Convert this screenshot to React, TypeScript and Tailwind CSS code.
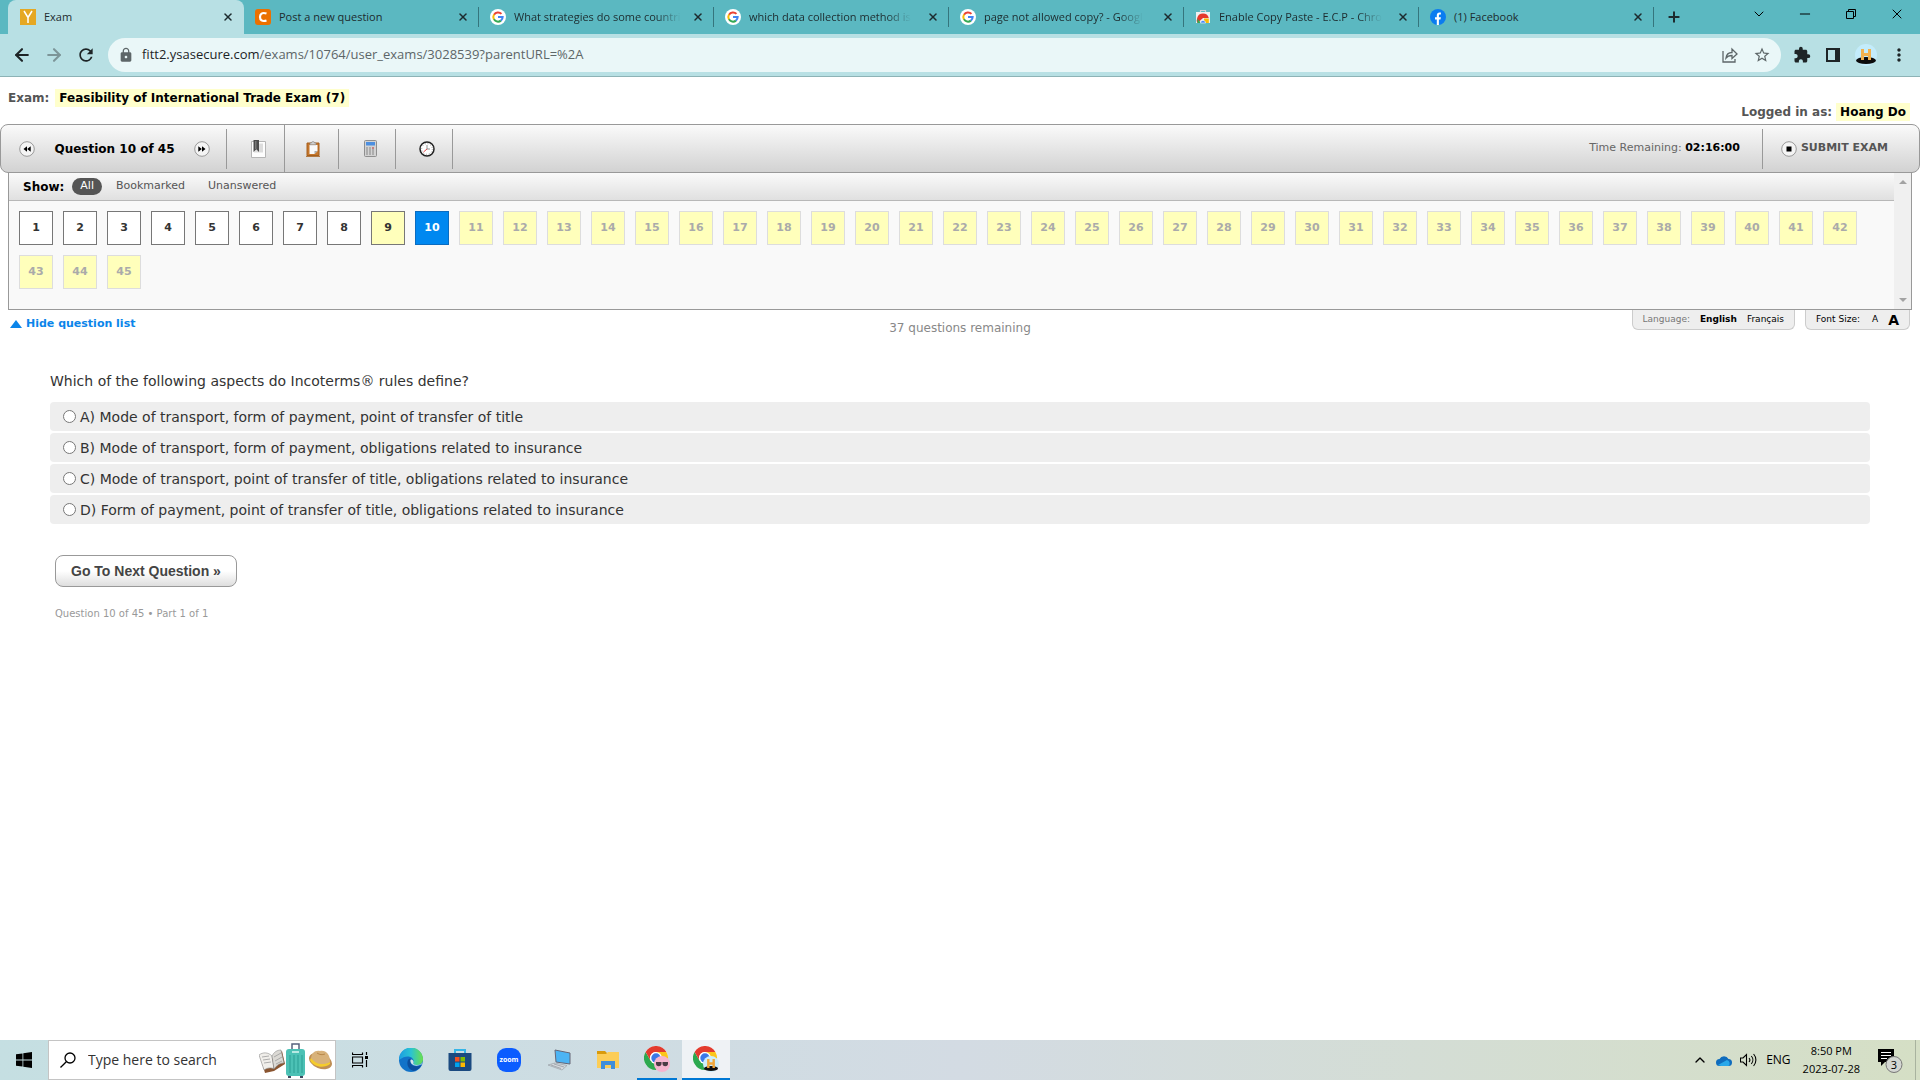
import React, { useState } from "react";
import { ArrowLeft, ArrowRight, ChevronDown, ChevronUp, Minus, Plus, X } from "lucide-react";
import { MdRefresh, MdLock, MdStarBorder, MdExtension, MdMoreVert } from "react-icons/md";

type TabInfo = { title: string; icon: React.ReactNode; active?: boolean; faded?: boolean };

function GoogleIcon() {
  return (
    <svg viewBox="0 0 24 24" className="size-4 shrink-0">
      <circle cx="12" cy="12" r="12" fill="#fff" />
      <g fill="none" strokeWidth="3">
        <path d="M17.2 7.4A7 7 0 0 0 6 8.5" stroke="#ea4335" />
        <path d="M6 8.4a7 7 0 0 0 0 7.2" stroke="#fbbc05" />
        <path d="M6 15.5a7 7 0 0 0 10.4 1.9" stroke="#34a853" />
        <path d="M12 12h7a7 7 0 0 1-2.6 5.4" stroke="#4285f4" />
      </g>
    </svg>
  );
}

function StoreFavicon() {
  return (
    <svg viewBox="0 0 16 16" className="size-4 shrink-0">
      <path d="M5.500 3V1.500h5V3" fill="none" stroke="#cfd4d6" strokeWidth="1.200" />
      <path d="M1 3h14v11H1z" fill="#eef0f1" />
      <path d="M2.500 14a5.500 5.500 0 0 1-.3-5A6 6 0 0 1 13.800 9H8z" fill="#e5392c" />
      <path d="M2.300 9.500 6 14H2.500z" fill="#34a853" />
      <path d="M9 9.500h4.800V14H9z" fill="#fbbc05" />
      <path d="M5.400 14a2.600 2.600 0 1 1 5.200 0z" fill="#4285f4" stroke="#fff" strokeWidth=".6" />
    </svg>
  );
}

const tabs: TabInfo[] = [
  {
    title: "Exam",
    active: true,
    icon: (
      <svg viewBox="0 0 16 16" className="size-4 shrink-0">
        <path d="M0 0h16v16H0z" fill="#e5a823" />
        <path d="M4 2l4 6.500 4-6.500M8 8.500V14" fill="none" stroke="#fff" strokeWidth="1.500" />
      </svg>
    ),
  },
  {
    title: "Post a new question",
    icon: (
      <svg viewBox="0 0 16 16" className="size-4 shrink-0">
        <rect width="16" height="16" rx="3" fill="#eb7100" />
        <path d="M11.500 4.500C7 3 5 5 5 8s2 5 6.500 3.500" fill="none" stroke="#fff" strokeWidth="2.200" />
      </svg>
    ),
  },
  { title: "What strategies do some countri", icon: <GoogleIcon />, faded: true },
  { title: "which data collection method is", icon: <GoogleIcon />, faded: true },
  { title: "page not allowed copy? - Googl", icon: <GoogleIcon />, faded: true },
  { title: "Enable Copy Paste - E.C.P - Chro", icon: <StoreFavicon />, faded: true },
  {
    title: "(1) Facebook",
    icon: (
      <svg viewBox="0 0 16 16" className="size-4 shrink-0">
        <circle cx="8" cy="8" r="8" fill="#0a7cf0" />
        <path d="M6.800 16v-5.500H5V8.200h1.800V6.500c0-1.900 1-2.900 2.700-2.900h1.400v2H9.900c-.7 0-1 .4-1 1.100v1.500h2l-.4 2.300H8.900V16z" fill="#fff" />
      </svg>
    ),
  },
];

function BrowserTabs() {
  return (
    <div className="flex h-[34px] bg-[#5bb8c1] pl-2 text-[#1d2b2e]">
      {tabs.map((t) => (
        <div
          key={t.title}
          className={
            t.active
              ? "flex w-[236px] shrink-0 items-center rounded-t-lg bg-[#b8e0e4] pr-2 pl-3"
              : "flex w-[235px] shrink-0 items-center pl-[11px]"
          }
        >
          <div className="flex flex-1 items-center gap-2">
            {t.icon}
            <span
              className={
                t.faded
                  ? "[mask-image:linear-gradient(to_right,black_85%,transparent)] text-[11px] whitespace-nowrap"
                  : "text-[11px] whitespace-nowrap"
              }
            >
              {t.title}
            </span>
          </div>
          <button aria-label={"Close " + t.title} className={t.active ? "flex size-4 items-center justify-center" : "mx-[7px] flex size-4 items-center justify-center"}>
            <X className="size-3" strokeWidth={3} />
          </button>
          {!t.active && <div className="h-5 w-px bg-[#35757d]" />}
        </div>
      ))}
      <button aria-label="New tab" className="flex w-10 items-center justify-center">
        <Plus className="size-4" strokeWidth={3} />
      </button>
      <div className="ml-auto flex h-7 text-black">
        <button aria-label="Search tabs" className="flex w-[46px] items-center justify-center">
          <ChevronDown className="size-4" strokeWidth={1.5} />
        </button>
        <button aria-label="Minimize" className="flex w-[46px] items-center justify-center">
          <Minus className="size-4" strokeWidth={1.5} />
        </button>
        <button aria-label="Restore" className="flex w-[46px] items-center justify-center">
          <svg viewBox="0 0 10 10" className="size-2.5" fill="none" stroke="#000">
            <path d="M.5 2.500h7v7h-7zM2.500 2.500v-2h7v7h-2" />
          </svg>
        </button>
        <button aria-label="Close window" className="flex w-[46px] items-center justify-center">
          <X className="size-4" strokeWidth={1.5} />
        </button>
      </div>
    </div>
  );
}

function Avatar() {
  return (
    <svg viewBox="0 0 22 22" className="size-[22px]">
      <circle cx="11" cy="11" r="11" fill="#c3ecfb" />
      <ellipse cx="11" cy="16.500" rx="10" ry="3.500" fill="#0c0c0c" />
      <path d="M7.500 5v11M14.500 5v11M7.500 10.500h7" stroke="#f2b14d" strokeWidth="3" fill="none" />
      <path d="M4 17h14" stroke="#0c0c0c" strokeWidth="2" />
    </svg>
  );
}

function AddressBar() {
  return (
    <div className="flex h-[43px] items-center border-b border-[#8db3b6] bg-[#b8e0e4] pr-[11px] pl-3 text-[#1d2426]">
      <div className="flex w-24 items-center gap-3">
        <button aria-label="Back"><ArrowLeft className="size-5" strokeWidth={2.5} /></button>
        <button aria-label="Forward" className="text-[#7c9598]"><ArrowRight className="size-5" strokeWidth={2.5} /></button>
        <button aria-label="Reload"><MdRefresh className="size-5" /></button>
      </div>
      <div className="flex h-[34px] flex-1 items-center rounded-full bg-[#eaf7f8] pr-2.5 pl-2.5 text-[#5d6668]">
        <MdLock className="size-4" />
        <div className="ml-2 flex-1 text-[13px]">
          <span className="text-[#1d2426]">fitt2.ysasecure.com</span>/exams/10764/user_exams/3028539?parentURL=%2A
        </div>
        <button aria-label="Share" className="mr-3.5">
          <svg viewBox="0 0 18 18" className="size-[18px]" fill="none" stroke="currentColor" strokeWidth="1.300">
            <path d="M2 5v11h12v-3M5 12c.5-4 3-5.500 6-5.500V3l5 5-5 4.500V9.500C8.500 9.500 6.500 10 5 12z" />
          </svg>
        </button>
        <button aria-label="Bookmark this tab"><MdStarBorder className="size-[18px]" /></button>
      </div>
      <div className="ml-3 flex items-center gap-3">
        <button aria-label="Extensions"><MdExtension className="size-[18px]" /></button>
        <button aria-label="Side panel" className="flex w-5 justify-center">
          <svg viewBox="0 0 14 14" className="size-3.5">
            <path d="M1 1h12v12H1z" fill="none" stroke="currentColor" strokeWidth="2" />
            <path d="M9 1h4v12H9z" fill="currentColor" />
          </svg>
        </button>
        <button aria-label="Profile"><Avatar /></button>
        <button aria-label="Menu"><MdMoreVert className="size-5" /></button>
      </div>
    </div>
  );
}

function RoundButton({ kind, label }: { kind: "prev" | "next" | "stop"; label: string }) {
  return (
    <svg viewBox="0 0 16 16" className="size-4" role="img" aria-label={label}>
      <circle cx="8" cy="8" r="7.300" fill="#f4f4f4" stroke="#999" strokeWidth="1" />
      {kind === "prev" && <path d="M8 5.300v5.400L4.500 8zM11.700 5.300v5.400L8.200 8z" fill="#000" />}
      {kind === "next" && <path d="M8 5.300v5.400L11.500 8zM4.300 5.300v5.400L7.800 8z" fill="#000" />}
      {kind === "stop" && <path d="M5.500 5.500h5v5h-5z" fill="#000" />}
    </svg>
  );
}

function ExamBar() {
  return (
    <div className="flex h-[49px] items-center rounded-lg border border-[#999] bg-linear-to-b from-[#fafafa] to-[#d2d2d2] text-black">
      <div className="flex h-10 w-[226px] items-center justify-between border-r border-[#999] pr-4 pl-[18px]">
        <button><RoundButton kind="prev" label="Previous question" /></button>
        <span className="text-xs font-bold">Question 10 of 45</span>
        <button><RoundButton kind="next" label="Next question" /></button>
      </div>
      <button aria-label="Bookmark" className="flex h-full w-[58px] items-center justify-center border-r border-[#999] pl-1">
        <svg viewBox="0 0 16 18" className="h-[18px] w-4">
          <path d="M1.500 1.500h14v16h-14z" fill="#fdfdfd" stroke="#b5b5b5" />
          <path d="M4 3.500h9v9H4z" fill="#dcdcdc" />
          <path d="M3.500 0H9v12l-2.700-2.700L3.500 12z" fill="#4a4a4a" />
          <path d="M5 1h1.500v8H5z" fill="#777" />
        </svg>
      </button>
      <button aria-label="Notes" className="flex h-10 w-[54px] items-center justify-center border-r border-[#999] pl-0.5">
        <svg viewBox="0 0 16 17" className="h-[17px] w-4">
          <path d="M2 3h12v12.500H2z" fill="#c5772c" stroke="#a65f1d" />
          <path d="M1 16.300h14" stroke="#a65f1d" />
          <path d="M4.500 5h8v6L9.500 14h-5z" fill="#f9f9f9" />
          <path d="M12.500 11h-3v3z" fill="#a9a9a9" />
          <path d="M5 4.800V3h1.500a1.500 1.500 0 0 1 3 0H11v1.800z" fill="#d0d0d0" stroke="#888" strokeWidth=".6" />
        </svg>
      </button>
      <button aria-label="Calculator" className="flex h-10 w-[57px] items-center justify-center border-r border-[#999] pl-1.5">
        <svg viewBox="0 0 13 17" className="h-[17px] w-[13px]">
          <rect x=".5" y=".5" width="12" height="16" rx="1" fill="#d3d3d3" stroke="#8f8f8f" />
          <path d="M2 2h9v3.500H2z" fill="#4d8fe0" />
          <path d="M2 8h9M2 10h9M2 12h9M2 14h9" stroke="#888" strokeWidth="1.200" strokeDasharray="2 1" />
          <path d="M8 8h2" stroke="#d55" strokeWidth="1.200" />
        </svg>
      </button>
      <button aria-label="Clock" className="flex h-10 w-[57px] items-center justify-center border-r border-[#999] pl-1.5">
        <svg viewBox="0 0 16 16" className="size-4">
          <circle cx="8" cy="8" r="7" fill="#fff" stroke="#222" strokeWidth="1.500" />
          <circle cx="8" cy="8" r="5.300" fill="none" stroke="#555" strokeWidth=".8" strokeDasharray=".7 2.075" />
          <path d="M8 8h3M8 8V4" stroke="#777" strokeWidth=".8" />
          <path d="M8 8l-3.500 3" stroke="#d33" strokeWidth=".9" />
        </svg>
      </button>
      <div className="ml-auto flex h-10 items-center border-r border-[#999] pr-[22px] text-[11px]">
        <span className="text-[#666]">Time Remaining:&nbsp;</span>
        <span className="font-bold">02:16:00</span>
      </div>
      <button className="flex items-center gap-1 pr-[31px] pl-[18px] text-[11px] font-bold text-[#555]">
        <RoundButton kind="stop" label="Submit" />
        SUBMIT EXAM
      </button>
    </div>
  );
}

function QuestionList() {
  const numbers = Array.from({ length: 45 }, (_, i) => i + 1);
  const style = (n: number) =>
    n < 9
      ? "size-[34px] border border-[#777] bg-white text-[#333]"
      : n === 9
        ? "size-[34px] border border-[#777] bg-[#ffffbb] text-[#333]"
        : n === 10
          ? "size-[34px] border border-[#0b6cc0] bg-[#0088f0] text-white"
          : "size-[34px] border border-[#ddd] bg-[#ffffbb] text-[#aaa]";
  return (
    <div className="mx-2 flex border-x border-b border-[#999] bg-[#f9f9f9]">
      <div className="min-w-0 flex-1">
        <div className="flex h-7 items-center border-b border-[#b8b8b8] bg-linear-to-b from-[#fafafa] to-[#e0e0e0] pl-3.5 text-[11px] text-[#555]">
          <span className="mr-2 text-xs font-bold text-black">Show:</span>
          <button className="mr-3.5 h-[17px] rounded-full bg-[#555] px-2 text-white">All</button>
          <button className="mr-[23px]">Bookmarked</button>
          <button>Unanswered</button>
        </div>
        <div className="flex flex-wrap gap-2.5 pt-2.5 pr-2 pb-5 pl-2.5 text-[11px] font-bold">
          {numbers.map((n) => (
            <button key={n} className={style(n)}>{n}</button>
          ))}
        </div>
      </div>
      <div className="flex w-[17px] flex-col items-center justify-between bg-[#f0f0f0] py-[7px]">
        <svg viewBox="0 0 8 4" className="h-1 w-2"><path d="M0 4l4-4 4 4z" fill="#a3a3a3" /></svg>
        <svg viewBox="0 0 8 4" className="h-1 w-2"><path d="M0 0l4 4 4-4z" fill="#a3a3a3" /></svg>
      </div>
    </div>
  );
}

const answers = [
  "A) Mode of transport, form of payment, point of transfer of title",
  "B) Mode of transport, form of payment, obligations related to insurance",
  "C) Mode of transport, point of transfer of title, obligations related to insurance",
  "D) Form of payment, point of transfer of title, obligations related to insurance",
];

function ExamPage() {
  const [picked, setPicked] = useState(-1);
  return (
    <main className="flex-1 bg-white font-['Verdana','DejaVu_Sans',sans-serif]">
      <header className="flex h-[47px] justify-between pr-2.5 pl-2 text-xs font-bold text-[#555]">
        <div className="mt-3 flex h-[18px] items-center">
          Exam:<span className="ml-1.5 bg-[#ffffcc] px-1 leading-[18px] text-black">Feasibility of International Trade Exam (7)</span>
        </div>
        <div className="mt-[26px] flex h-[18px] items-center">
          Logged in as:<span className="ml-1 bg-[#ffffcc] px-1 leading-[18px] text-black">Hoang Do</span>
        </div>
      </header>
      <ExamBar />
      <QuestionList />
      <div className="grid grid-cols-3 items-start px-2.5">
        <button className="mt-1.5 flex items-center gap-1 text-[11px] font-bold text-[#0b85ea]">
          <svg viewBox="0 0 12 8" className="h-2 w-3"><path d="M0 8l6-8 6 8z" fill="#0b85ea" /></svg>
          Hide question list
        </button>
        <p className="mt-2.5 text-center text-xs text-[#888]">37 questions remaining</p>
        <div className="flex justify-end gap-2.5 text-[9px] text-black">
          <div className="flex h-5 items-center rounded-b-md border border-t-0 border-[#ccc] bg-[#eee] px-2.5">
            <span className="mr-2.5 text-[#777]">Language:</span>
            <button className="mr-2.5 font-bold">English</button>
            <button>Français</button>
          </div>
          <div className="flex h-5 items-center rounded-b-md border border-t-0 border-[#ccc] bg-[#eee] px-2.5">
            <span className="mr-3">Font Size:</span>
            <button className="mr-2.5">A</button>
            <button className="text-sm font-bold">A</button>
          </div>
        </div>
      </div>
      <section className="mt-[35px] px-[50px] text-sm text-[#333]">
        <h1 className="leading-5">Which of the following aspects do Incoterms® rules define?</h1>
        <div className="mt-[11px] flex flex-col gap-0.5">
          {answers.map((a, i) => (
            <label key={a} className="flex h-[29px] items-center gap-1 rounded-sm bg-[#eee] pl-[13px]">
              <input
                type="radio"
                name="answer"
                checked={picked === i}
                onChange={() => setPicked(i)}
                className="size-[13px]"
              />
              {a}
            </label>
          ))}
        </div>
        <button className="mt-[31px] ml-[5px] block h-8 rounded-lg border border-[#999] bg-linear-to-b from-white from-50% to-[#dedede] px-[15px] font-['Liberation_Sans',sans-serif] text-sm font-bold text-[#444]">
          Go To Next Question »
        </button>
        <p className="mt-5 ml-[5px] text-[10px] text-[#999]">Question 10 of 45 • Part 1 of 1</p>
      </section>
    </main>
  );
}

function ChromeIcon({ badge }: { badge: "pink" | "hoang" }) {
  return (
    <svg viewBox="0 0 26 26" className="size-[26px]">
      <circle cx="12" cy="12" r="12" fill="#fff" />
      <path d="M12 6h10.400A12 12 0 0 1 12 24l5.200-9z" fill="#fcc61b" />
      <path d="M1.600 6A12 12 0 0 0 12 24l5.200-9L6.800 15z" fill="#2da94f" />
      <path d="M1.600 6A12 12 0 0 1 22.400 6H12a6 6 0 0 0-5.200 9z" fill="#e33b2e" />
      <circle cx="12" cy="12" r="6" fill="#fff" />
      <circle cx="12" cy="12" r="4.700" fill="#3b78e7" />
      {badge === "pink" ? (
        <g>
          <circle cx="18" cy="18" r="8" fill="#f6b4cf" />
          <path d="M12 16h5.500v1.500a2.700 2.700 0 0 1-5.500 0zM18.500 16H24v1.500a2.700 2.700 0 0 1-5.500 0z" fill="#4a3b45" />
        </g>
      ) : (
        <g>
          <circle cx="18" cy="18" r="8" fill="#cdeefb" />
          <ellipse cx="18" cy="22.500" rx="7" ry="2.500" fill="#111" />
          <path d="M15.300 13v9M20.700 13v9M15.300 17.500h5.400" stroke="#f2a83c" strokeWidth="2.400" />
        </g>
      )}
    </svg>
  );
}

function SearchArt() {
  return (
    <svg viewBox="0 0 74 38" className="h-[38px] w-[74px]">
      <path d="M1 15l12 3 10-8 3 13-11 7-9 2z" fill="#8a5530" />
      <path d="M0 14c4-3 9-3 13 1l2 13c-3-2-7-1-10 1z" fill="#f0eeea" stroke="#777" strokeWidth=".5" />
      <path d="M13 15c2-4 5-6 9-6l3 13c-4 0-7 2-10 6z" fill="#dbd9d4" stroke="#777" strokeWidth=".5" />
      <path d="M3 16l7-1M4 19l7-1M5 22l7-1M15 16l7-4M16 20l7-4M17 23l6-3" stroke="#9c9c9c" strokeWidth=".8" />
      <path d="M33 9V3h7v6" fill="none" stroke="#55617d" strokeWidth="1.500" />
      <rect x="27" y="8" width="19" height="27" rx="3" fill="#4cc1b5" />
      <path d="M31 14v18M35 14v18M39 14v18M43 14v18" stroke="#2a9f95" />
      <path d="M33 10h7v2h-7z" fill="#b7e9e3" />
      <path d="M29 35h3v2h-3zM41 35h3v2h-3z" fill="#3f4b61" />
      <ellipse cx="61.500" cy="20" rx="12" ry="7.500" transform="rotate(22 61.500 20)" fill="#bf8f55" />
      <path d="M52 19c0-7 4-10 9-9 6-1 10 3 10 11-5 5-15 3-19-2z" fill="#d8b27a" />
      <path d="M52 17c4 6 12 8 19 4v2c-6 5-17 3-20-4z" fill="#f5cc2c" />
      <path d="M58 12c3 2 5 2 8 1" stroke="#b8884a" fill="none" />
    </svg>
  );
}

function Taskbar() {
  return (
    <footer className="flex h-10 items-center bg-linear-to-r from-[#c5dfe2] via-[#d3dbe3] to-[#d5dfc5] font-['Segoe_UI','Open_Sans',sans-serif] text-black">
      <button aria-label="Start" className="flex w-12 justify-center">
        <svg viewBox="0 0 16 16" className="size-4">
          <path d="M0 2.300 6.500 1.400v6.200H0zM7.300 1.300 16 0v7.600H7.300zM0 8.400h6.500v6.200L0 13.700zM7.300 8.400H16V16l-8.700-1.300z" fill="#000" />
        </svg>
      </button>
      <div className="flex h-10 w-72 items-center border border-[#c4c4c4] bg-white pr-0.5 pl-[11px]">
        <svg viewBox="0 0 16 16" className="size-4" fill="none" stroke="#000" strokeWidth="1.300">
          <circle cx="10" cy="6" r="5" />
          <path d="M6.300 9.700.5 15.500" />
        </svg>
        <input aria-label="Search" placeholder="Type here to search" className="ml-3 w-0 flex-1 text-sm placeholder:text-[#333] placeholder:opacity-100" />
        <SearchArt />
      </div>
      <button aria-label="Task view" className="flex w-12 justify-center">
        <svg viewBox="0 0 16 16" className="size-4" fill="none" stroke="#000" strokeWidth="1.200">
          <path d="M.5.500v2h10v-2M.5 5h10v6H.5zM.5 15.500v-2h10v2M14.500 0v3M14.500 8v7" />
          <path d="M13 4h3v3h-3z" fill="#000" stroke="none" />
        </svg>
      </button>
      <button aria-label="Edge" className="flex w-[54px] justify-center">
        <svg viewBox="0 0 24 24" className="size-6">
          <defs>
            <linearGradient id="edge-top" x1="0" x2="1">
              <stop offset="0" stopColor="#1b9de2" />
              <stop offset=".5" stopColor="#2bc3d2" />
              <stop offset="1" stopColor="#6be04b" />
            </linearGradient>
          </defs>
          <circle cx="12" cy="12" r="12" fill="#1273c9" />
          <path d="M0 12A12 12 0 0 1 24 11c0 4-3 6-6.500 6-2.500 0-4-1-3-2.500C16 10 9 5 0 12z" fill="url(#edge-top)" />
          <path d="M9 12c-2 5 1 10 6 11 4-1 6-3 7.500-6-4 2.500-10 1.500-11-2.500-.3-1.500.2-2.500 1-3.200-1-.8-2.800-.5-3.500.7z" fill="#0c4f9e" />
          <path d="M11.500 12c-.8 4 4 7.500 11 4.500l1.500-3c-1 2.500-3.500 3.700-6.500 3.500-2.500 0-4-1-3-2.500.6-1.500-2-4-3-2.500z" fill="#d5e4e8" />
        </svg>
      </button>
      <button aria-label="Store" className="flex w-11 justify-center">
        <svg viewBox="0 0 24 24" className="size-6">
          <path d="M7 6V2h10v4" fill="none" stroke="#35b5e8" strokeWidth="2" />
          <path d="M.500 5h23v16a2 2 0 0 1-2 2h-19a2 2 0 0 1-2-2z" fill="#1b4a80" />
          <path d="M7 9h4.500v4.500H7z" fill="#f25022" />
          <path d="M12.500 9H17v4.500h-4.500z" fill="#7fba00" />
          <path d="M7 14.500h4.500V19H7z" fill="#00a4ef" />
          <path d="M12.500 14.500H17V19h-4.500z" fill="#ffb900" />
        </svg>
      </button>
      <button aria-label="Zoom" className="flex w-[54px] justify-center">
        <span className="flex size-6 items-center justify-center rounded-[9px] bg-[#0b5cff] text-[7px] font-bold text-white">zoom</span>
      </button>
      <button aria-label="This PC" className="flex w-[46px] justify-center">
        <svg viewBox="0 0 24 24" className="size-6">
          <path d="M8 2l15 3v11l-14-2z" fill="#4cb4f4" stroke="#667" />
          <path d="M1 17l7-2 12 2.500-5 4.500z" fill="#d6dade" stroke="#9aa0a7" strokeWidth=".7" />
          <path d="M4 17l10 3.500M7 16l10 3" stroke="#8d949b" strokeWidth=".7" />
        </svg>
      </button>
      <button aria-label="File Explorer" className="flex w-[52px] justify-center">
        <svg viewBox="0 0 22 20" className="h-5 w-[22px]">
          <path d="M0 1h8l2 2v3H0z" fill="#d99a0b" />
          <path d="M0 4h9l2-2h11v16H0z" fill="#fccd57" />
          <path d="M4 19v-8h14v8h-4v-4H8v4z" fill="#3f8edb" />
        </svg>
      </button>
      <button aria-label="Chrome, first profile" className="ml-[3px] flex h-10 w-10 items-center justify-center border-b-2 border-[#0078d4]">
        <ChromeIcon badge="pink" />
      </button>
      <button aria-label="Chrome, second profile" className="ml-[5px] flex h-10 w-12 items-center justify-center border-b-2 border-[#0078d4] bg-[#eff2f5]">
        <ChromeIcon badge="hoang" />
      </button>
      <div className="ml-auto flex h-10 items-center text-xs">
        <button aria-label="Show hidden icons"><ChevronUp className="size-4" strokeWidth={2} /></button>
        <svg viewBox="0 0 16 11" className="ml-2 h-[11px] w-4">
          <path d="M3.500 11a3.500 3.500 0 0 1 0-7A5 5 0 0 1 12.500 4a3.500 3.500 0 0 1 0 7z" fill="#0f6cbd" />
          <path d="M5 11 2 10l9-5a3.500 3.500 0 0 1 1.500 6z" fill="#28a8ea" />
        </svg>
        <svg viewBox="0 0 17 14" className="ml-2 h-3.5 w-[17px]" fill="none" stroke="#000" strokeWidth="1.100">
          <path d="M.5 5h2.500l3.500-3.500v11L3 9H.5zM9 5a3 3 0 0 1 0 4M11.300 3a6 6 0 0 1 0 8M13.600 1a9 9 0 0 1 0 12" />
        </svg>
        <span className="ml-[9px]">ENG</span>
        <div className="ml-3 text-center text-[11px] leading-[18px]">
          <div>8:50 PM</div>
          <div>2023-07-28</div>
        </div>
        <button aria-label="Notifications" className="mr-3 ml-[17px]">
          <svg viewBox="0 0 26 26" className="size-[26px]">
            <path d="M1 2h16v13H8l-4 4v-4H1z" fill="#000" />
            <path d="M4 5.500h10M4 8.500h10M4 11.500h6" stroke="#fff" strokeWidth="1.200" />
            <circle cx="17" cy="17.500" r="8" fill="#d4d7d2" stroke="#777" />
            <text x="17" y="21.500" textAnchor="middle" fontSize="11" fill="#000">3</text>
          </svg>
        </button>
        <div className="mr-1 h-10 w-px bg-[#a9b39f]" />
      </div>
    </footer>
  );
}

export default function App() {
  return (
    <div className="flex min-h-screen flex-col">
      <div className="font-['Segoe_UI','Open_Sans',sans-serif]">
        <BrowserTabs />
        <AddressBar />
      </div>
      <ExamPage />
      <Taskbar />
    </div>
  );
}
